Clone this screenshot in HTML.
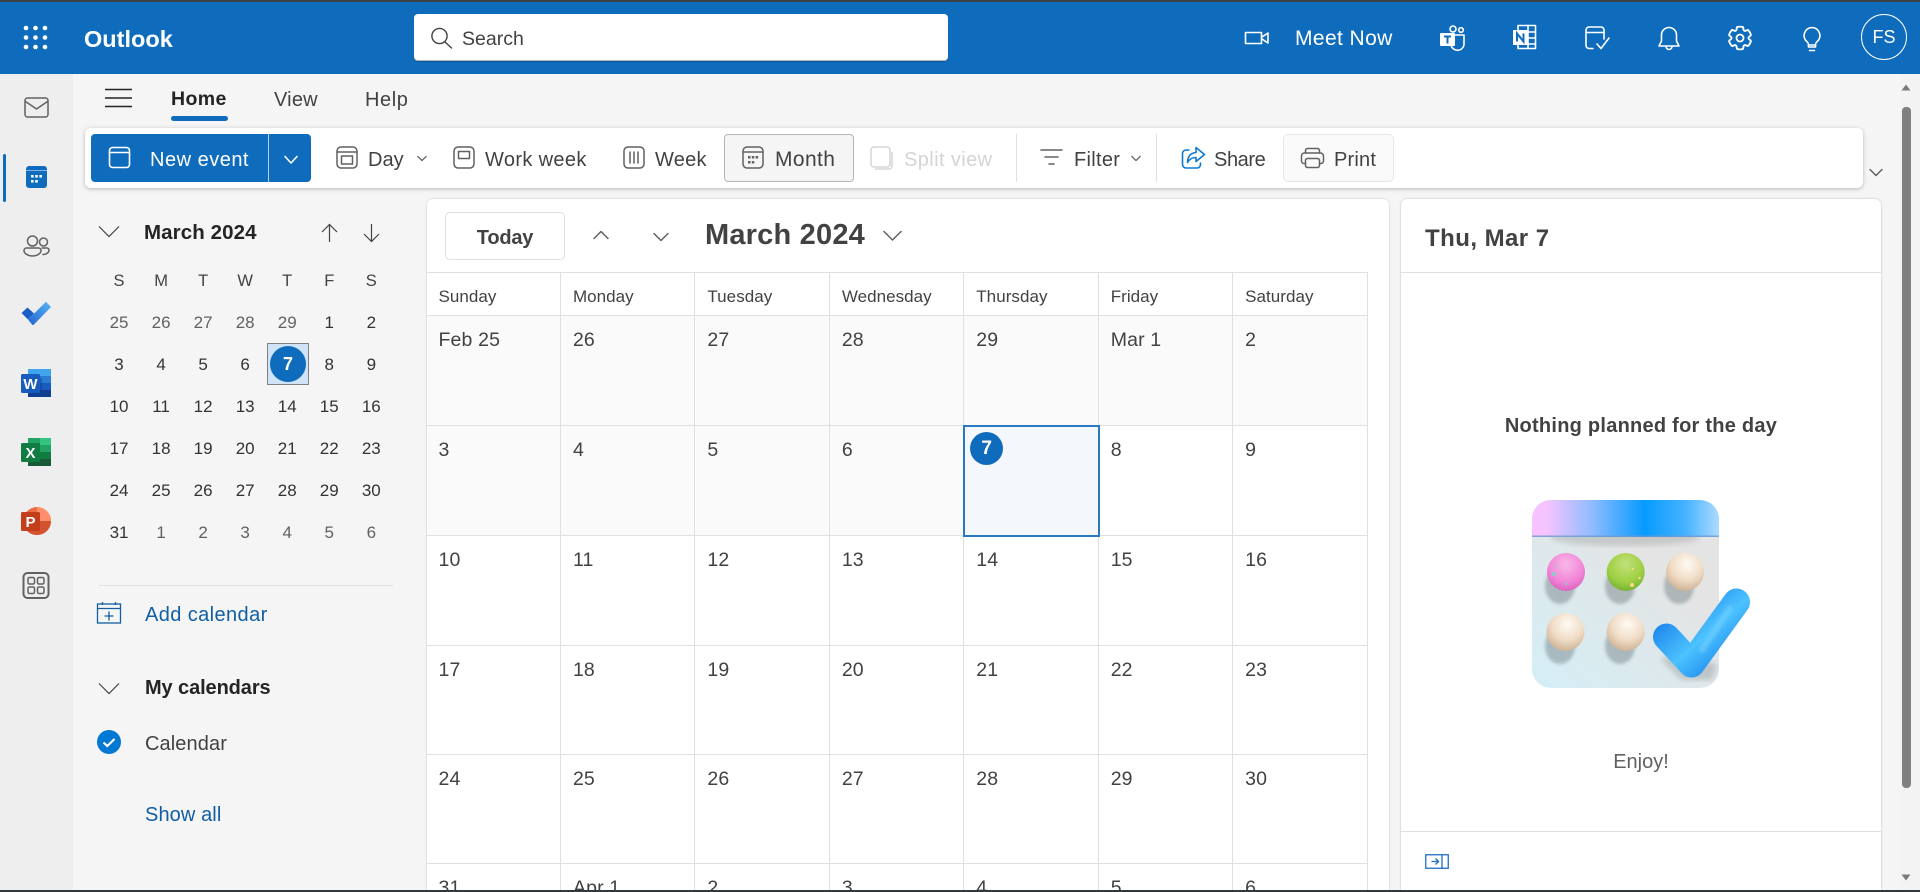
<!DOCTYPE html>
<html lang="en"><head><meta charset="utf-8"><title>Outlook Calendar</title>
<style>
html,body{margin:0;padding:0;width:1920px;height:892px;overflow:hidden;background:#f5f5f5;font-family:"Liberation Sans",sans-serif;color:#242424}
#root{position:absolute;left:0;top:0;width:1920px;height:892px;overflow:hidden}
.t{position:absolute;white-space:nowrap;line-height:1}
.a{position:absolute}
svg{position:absolute;overflow:visible}
.s{fill:none;stroke:#616161;stroke-width:1.5;stroke-linecap:round;stroke-linejoin:round}
.w{fill:none;stroke:#fff;stroke-width:1.6;stroke-linecap:round;stroke-linejoin:round}
.mini{position:absolute;left:98px;top:260px;display:grid;grid-template-columns:repeat(7,42.05px);grid-auto-rows:42px;font-size:17px;color:#333}
.mini div{display:flex;align-items:center;justify-content:center}
.mini .o{color:#616161}
.mini .h{color:#424242;font-size:16.5px}
.grid{position:absolute;display:grid;grid-template-columns:repeat(7,134.45px);grid-template-rows:43px 110px 110px 110px 109px 109px 26px;border-top:1px solid #e0e0e0;box-sizing:border-box}
.grid div{border-right:1px solid #e0e0e0;border-bottom:1px solid #e0e0e0;box-sizing:border-box;padding:13px 0 0 12px;font-size:19.5px;color:#424242;line-height:22px;position:relative;letter-spacing:.15px;overflow:hidden}
.grid div.h{font-size:17px;padding-top:13px;letter-spacing:.05px}
.grid div.g{background:#fafafa}
.grid div.last{border-bottom:0}
.grid div.sel{background:#f4f8fc;outline:2px solid #2a78bf;outline-offset:-1px;z-index:2;overflow:visible}
.sel span{position:absolute;left:6px;top:6px;width:33px;height:33px;border-radius:50%;background:#0f6cbd;color:#fff;font-weight:bold;display:flex;align-items:center;justify-content:center;font-size:19px}
</style></head><body><div id="root">

<!-- top bars -->
<div class="a" style="left:0;top:0;width:1920px;height:2px;background:#3a4248"></div>
<div class="a" style="left:0;top:2px;width:1920px;height:72px;background:#0f6cbd"></div>

<!-- waffle -->
<svg style="left:0;top:0" width="70" height="74"><g fill="#fff"><circle cx="26" cy="28" r="2.3"/><circle cx="35.5" cy="28" r="2.3"/><circle cx="45" cy="28" r="2.3"/><circle cx="26" cy="37.5" r="2.3"/><circle cx="35.5" cy="37.5" r="2.3"/><circle cx="45" cy="37.5" r="2.3"/><circle cx="26" cy="47" r="2.3"/><circle cx="35.5" cy="47" r="2.3"/><circle cx="45" cy="47" r="2.3"/></g></svg>
<div class="t" style="left:84px;top:28px;font-size:23.5px;font-weight:bold;color:#fff">Outlook</div>

<!-- search -->
<div class="a" style="left:414px;top:14px;width:534px;height:47px;background:#fff;border-radius:4px;box-shadow:inset 0 -1px 0 #b5b5b5,0 1px 1px rgba(0,0,0,.2)"></div>
<svg style="left:429px;top:26px" width="26" height="24" viewBox="0 0 26 24"><circle cx="10.5" cy="10" r="7.6" fill="none" stroke="#424242" stroke-width="1.4"/><path d="M16 16l6.500 6" stroke="#424242" stroke-width="1.4" fill="none" stroke-linecap="round"/></svg>
<div class="t" style="left:462px;top:30px;font-size:19.500px;color:#424242">Search</div>

<!-- header right -->
<svg style="left:1244px;top:29px" width="26" height="18" viewBox="0 0 26 18"><rect x="1.5" y="3.5" width="16" height="11" class="w"/><path d="M18 8l6-4v10l-6-4" class="w"/></svg>
<div class="t" style="left:1295px;top:28px;font-size:21px;color:#fff;letter-spacing:.4px">Meet Now</div>
<!-- teams -->
<svg style="left:1438px;top:24px" width="28" height="28" viewBox="0 0 28 28"><circle cx="15" cy="5" r="3" class="w"/><circle cx="23" cy="6" r="2.3" class="w"/><path d="M11 11h15v8a6.5 6.5 0 0 1-13 1.5" class="w"/><rect x="2" y="9" width="15" height="13" rx="1" fill="#fff"/><path d="M6 12.5h7M9.5 12.5V19.5" stroke="#0f6cbd" stroke-width="2" fill="none"/></svg>
<!-- onenote -->
<svg style="left:1512px;top:24px" width="26" height="27" viewBox="0 0 26 27"><path d="M6 1.5h17.5v23H6z" class="w" stroke-width="1.4"/><path d="M16 8h7M16 14h7M16 20h7M16 1.5v23" class="w" stroke-width="1.3"/><rect x="1" y="6" width="15" height="15" fill="#fff"/><path d="M5 17.500V9.500l6.500 8V9.500" stroke="#0f6cbd" stroke-width="2" fill="none"/></svg>
<!-- todo -->
<svg style="left:1584px;top:25px" width="28" height="28" viewBox="0 0 28 28"><path d="M9 23.500H5a3 3 0 0 1-3-3V5a3 3 0 0 1 3-3h12a3 3 0 0 1 3 3v9" class="w"/><path d="M2 7.500h18" class="w"/><path d="M13 19l4 4.500L25 13" class="w"/></svg>
<!-- bell -->
<svg style="left:1655px;top:25px" width="28" height="28" viewBox="0 0 28 28"><path d="M14 2.500a7.500 7.500 0 0 0-7.500 7.500v6L4 21h20l-2.500-5v-6A7.500 7.500 0 0 0 14 2.500z" class="w"/><path d="M11 21.500a3 3 0 0 0 6 0" class="w"/></svg>
<!-- gear -->
<svg style="left:1726px;top:24px" width="28" height="28" viewBox="0 0 24 24"><path class="w" stroke-width="1.4" d="M12.010 2.250c.74 0 1.470.1 2.180.25.320.07.550.33.590.65l.170 1.530a1.380 1.380 0 0 0 1.920 1.110l1.400-.61c.3-.13.640-.06.850.17a9.800 9.800 0 0 1 2.200 3.800c.1.3 0 .63-.26.82l-1.240.92a1.380 1.380 0 0 0 0 2.220l1.240.92c.26.190.36.520.27.820a9.800 9.800 0 0 1-2.200 3.800.75.75 0 0 1-.85.170l-1.400-.62a1.380 1.380 0 0 0-1.930 1.120l-.17 1.520a.75.75 0 0 1-.57.650 9.520 9.520 0 0 1-4.410 0 .75.75 0 0 1-.57-.650l-.17-1.520a1.380 1.380 0 0 0-1.930-1.110l-1.400.62a.75.75 0 0 1-.85-.180 9.800 9.800 0 0 1-2.200-3.800c-.1-.3.01-.63.27-.82l1.240-.92a1.380 1.380 0 0 0 0-2.220l-1.240-.92a.75.75 0 0 1-.27-.82 9.800 9.800 0 0 1 2.200-3.800c.2-.23.54-.3.85-.17l1.400.62c.83.37 1.790-.19 1.930-1.120l.17-1.530a.75.75 0 0 1 .58-.65c.7-.15 1.430-.24 2.180-.25Z"/><circle cx="12" cy="12" r="3" class="w" stroke-width="1.4"/></svg>
<!-- bulb -->
<svg style="left:1798px;top:25px" width="28" height="28" viewBox="0 0 28 28"><path d="M14 2.500a8 8 0 0 0-5 14.200c.9.800 1.400 1.800 1.500 3v2.300h7v-2.300c.1-1.200.6-2.200 1.500-3a8 8 0 0 0-5-14.200z" class="w"/><path d="M10.500 20h7" class="w"/><path d="M11.500 25.500h5" class="w" stroke-width="2"/></svg>
<div class="a" style="left:1861px;top:14px;width:46px;height:46px;border:1.3px solid #fff;border-radius:50%;box-sizing:border-box;color:#fff;font-size:18px;display:flex;align-items:center;justify-content:center">FS</div>

<!-- left rail -->
<div class="a" style="left:0;top:74px;width:73px;height:816px;background:#eeeeee"></div>
<svg style="left:24px;top:97px" width="25" height="21" viewBox="0 0 25 21"><rect x="1" y="1" width="23" height="19" rx="2.500" class="s"/><path d="M1.500 4.500L12.500 12l11-7.500" class="s"/></svg>
<div class="a" style="left:3px;top:154px;width:3px;height:48px;background:#0f6cbd;border-radius:2px"></div>
<svg style="left:26px;top:166px" width="21" height="22" viewBox="0 0 21 22"><rect x="0" y="0" width="21" height="22" rx="3" fill="#0f6cbd"/><rect x="0" y="4" width="21" height="1" fill="#7fb5e6"/><g fill="#fff"><rect x="5" y="9" width="2.600" height="2.600"/><rect x="9.200" y="9" width="2.600" height="2.600"/><rect x="13.400" y="9" width="2.600" height="2.600"/><rect x="5" y="14" width="2.600" height="2.600"/><rect x="9.200" y="14" width="2.600" height="2.600"/></g></svg>
<svg style="left:23px;top:235px" width="27" height="22" viewBox="0 0 27 22"><circle cx="9.500" cy="6" r="5" class="s"/><circle cx="20.500" cy="7" r="4" class="s"/><path d="M3.500 13h12a2.500 2.500 0 0 1 2.500 2.500c0 3-4 5.500-8.500 5.500S1 18.500 1 15.500A2.500 2.500 0 0 1 3.500 13z" class="s"/><path d="M20 19.500c3.500 0 6-2 6-4.500a2 2 0 0 0-2-2h-5" class="s"/></svg>
<svg style="left:21px;top:301px" width="30" height="25" viewBox="0 0 30 25"><defs><linearGradient id="td" x1="0" y1="1" x2="1" y2="0"><stop offset="0" stop-color="#2564cf"/><stop offset="1" stop-color="#56b4f5"/></linearGradient></defs><path d="M0.500 12L6.500 6.500 13 12.500 7 18.500z" fill="#1b5fc4"/><path d="M7 18.500L25 0.800 30 6 13 23.500q-1 1-2 0z" fill="url(#td)"/></svg>
<!-- Word -->
<svg style="left:21px;top:369px" width="30" height="28" viewBox="0 0 30 28"><rect x="7" y="0" width="23" height="7" fill="#41a5ee"/><rect x="7" y="7" width="23" height="7" fill="#2b7cd3"/><rect x="7" y="14" width="23" height="7" fill="#185abd"/><rect x="7" y="21" width="23" height="7" fill="#103f91"/><rect x="7" y="9" width="14" height="15" fill="#0c3a85" opacity=".4"/><rect x="0" y="5" width="19" height="19" rx="1.500" fill="#185abd"/><text x="9.500" y="20" font-family="Liberation Sans" font-size="15" font-weight="bold" fill="#fff" text-anchor="middle">W</text></svg>
<!-- Excel -->
<svg style="left:21px;top:438px" width="30" height="28" viewBox="0 0 30 28"><rect x="7" y="0" width="12" height="7" fill="#21a366"/><rect x="19" y="0" width="11" height="7" fill="#33c481"/><rect x="7" y="7" width="12" height="7" fill="#107c41"/><rect x="19" y="7" width="11" height="7" fill="#21a366"/><rect x="7" y="14" width="12" height="7" fill="#185c37"/><rect x="19" y="14" width="11" height="7" fill="#107c41"/><rect x="7" y="21" width="23" height="7" fill="#185c37"/><rect x="0" y="5" width="19" height="19" rx="1.500" fill="#107c41"/><text x="9.500" y="20" font-family="Liberation Sans" font-size="15" font-weight="bold" fill="#fff" text-anchor="middle">X</text></svg>
<!-- PPT -->
<svg style="left:21px;top:507px" width="30" height="28" viewBox="0 0 30 28"><circle cx="16" cy="14" r="14" fill="#ed6c47"/><path d="M16 0a14 14 0 0 1 14 14H16z" fill="#ff8f6b"/><path d="M16 14h14a14 14 0 0 1-25 8.700z" fill="#d35230"/><rect x="0" y="5" width="19" height="19" rx="1.500" fill="#c43e1c"/><text x="9.500" y="20" font-family="Liberation Sans" font-size="15" font-weight="bold" fill="#fff" text-anchor="middle">P</text></svg>
<!-- Apps -->
<svg style="left:22px;top:572px" width="28" height="28" viewBox="0 0 28 28"><rect x="1.500" y="1" width="25" height="25" rx="4" fill="none" stroke="#616161" stroke-width="2"/><g fill="none" stroke="#616161" stroke-width="1.500"><rect x="6" y="5.500" width="6.500" height="6.500" rx="1.500"/><rect x="15.500" y="5.500" width="6.500" height="6.500" rx="1.500"/><rect x="6" y="15" width="6.500" height="6.500" rx="1.500"/><rect x="15.500" y="15" width="6.500" height="6.500" rx="1.500"/></g></svg>

<!-- tabs -->
<svg style="left:105px;top:88px" width="28" height="20" viewBox="0 0 28 20"><path d="M0 1.500h27M0 10h27M0 18.500h27" stroke="#242424" stroke-width="1.500" fill="none"/></svg>
<div class="t" style="left:171px;top:90px;font-size:19.5px;font-weight:bold;color:#242424;letter-spacing:.4px">Home</div>
<div class="a" style="left:171px;top:116px;width:57px;height:5px;background:#0f6cbd;border-radius:3px"></div>
<div class="t" style="left:274px;top:90px;font-size:20px;color:#424242;letter-spacing:.2px">View</div>
<div class="t" style="left:365px;top:90px;font-size:20px;color:#424242;letter-spacing:.6px">Help</div>

<!-- ribbon -->
<div class="a" style="left:85px;top:128px;width:1778px;height:60px;background:#fff;border-radius:6px;box-shadow:0 1px 4px rgba(0,0,0,.25)"></div>
<div class="a" style="left:91px;top:134px;width:220px;height:48px;background:#0f6cbd;border-radius:4px"></div>
<div class="a" style="left:268px;top:134px;width:1px;height:48px;background:#b7d3ec"></div>
<svg style="left:108px;top:146px" width="23" height="23" viewBox="0 0 23 23"><rect x="1.500" y="1.500" width="20" height="20" rx="3" class="w"/><path d="M1.500 6.500h20" class="w"/></svg>
<div class="t" style="left:150px;top:150px;font-size:20px;color:#fff;letter-spacing:.5px">New event</div>
<svg style="left:284px;top:155px" width="14" height="10" viewBox="0 0 14 10"><path d="M1 1.500l6 6.500 6-6.500" class="w" stroke-width="1.300"/></svg>

<svg style="left:336px;top:146px" width="22" height="23" viewBox="0 0 22 23"><rect x="1" y="1" width="20" height="21" rx="4" class="s"/><path d="M1 6h20" class="s"/><rect x="5.500" y="10" width="11" height="8" class="s"/></svg>
<div class="t" style="left:368px;top:150px;font-size:20px;color:#424242">Day</div>
<svg style="left:417px;top:155px" width="10" height="7" viewBox="0 0 12 8"><path d="M1 1.500l5 5 5-5" class="s" stroke-width="1"/></svg>

<svg style="left:453px;top:146px" width="22" height="23" viewBox="0 0 22 23"><rect x="1" y="1" width="20" height="21" rx="4" class="s"/><rect x="5.500" y="5.500" width="11" height="7" class="s"/></svg>
<div class="t" style="left:485px;top:150px;font-size:20px;color:#424242;letter-spacing:.35px">Work week</div>

<svg style="left:623px;top:146px" width="22" height="23" viewBox="0 0 22 23"><rect x="1" y="1" width="20" height="21" rx="4" class="s"/><path d="M7 6v11M11 6v11M15 6v11" class="s" stroke-width="1.200"/></svg>
<div class="t" style="left:655px;top:150px;font-size:20px;color:#424242;letter-spacing:.25px">Week</div>

<div class="a" style="left:724px;top:134px;width:130px;height:48px;background:#f5f5f5;border:1px solid #b5b5b5;border-radius:4px;box-sizing:border-box"></div>
<svg style="left:742px;top:146px" width="22" height="23" viewBox="0 0 22 23"><rect x="1" y="1" width="20" height="21" rx="4" class="s"/><path d="M1 6h20" class="s"/><g fill="#616161"><rect x="6" y="10" width="2.500" height="2.500"/><rect x="9.800" y="10" width="2.500" height="2.500"/><rect x="13.600" y="10" width="2.500" height="2.500"/><rect x="6" y="15" width="2.500" height="2.500"/><rect x="9.800" y="15" width="2.500" height="2.500"/></g></svg>
<div class="t" style="left:775px;top:149px;font-size:21px;color:#424242;letter-spacing:.4px">Month</div>

<svg style="left:870px;top:146px" width="24" height="24" viewBox="0 0 24 24"><rect x="1" y="1" width="19" height="20" rx="3" fill="none" stroke="#d6d6d6" stroke-width="1.500"/><path d="M5 23h14a3 3 0 0 0 3-3V6" fill="none" stroke="#d6d6d6" stroke-width="1.500"/></svg>
<div class="t" style="left:904px;top:150px;font-size:20px;color:#d4d4d4;letter-spacing:.4px">Split view</div>
<div class="a" style="left:1016px;top:134px;width:1px;height:48px;background:#e0e0e0"></div>

<svg style="left:1040px;top:148px" width="24" height="18" viewBox="0 0 24 18"><path d="M1 2h21M5 9h13M9 16h5" class="s" stroke-width="1.600"/></svg>
<div class="t" style="left:1074px;top:150px;font-size:20px;color:#424242;letter-spacing:.3px">Filter</div>
<svg style="left:1131px;top:155px" width="10" height="7" viewBox="0 0 12 8"><path d="M1 1.500l5 5 5-5" class="s" stroke-width="1"/></svg>
<div class="a" style="left:1156px;top:134px;width:1px;height:48px;background:#e0e0e0"></div>

<svg style="left:1181px;top:146px" width="25" height="24" viewBox="0 0 25 24"><path d="M8 4H5a3.500 3.500 0 0 0-3.500 3.500v11A3.500 3.500 0 0 0 5 22h11a3.500 3.500 0 0 0 3.500-3.500V17" fill="none" stroke="#0f78d4" stroke-width="1.600" stroke-linecap="round"/><path d="M15 1.500L23.500 8.500 15 15.500V11.500c-4 0-6.500 1.500-8.500 5 .2-6 3-9.500 8.500-10z" fill="none" stroke="#0f78d4" stroke-width="1.600" stroke-linejoin="round"/></svg>
<div class="t" style="left:1214px;top:150px;font-size:20px;color:#424242;letter-spacing:-.4px">Share</div>

<div class="a" style="left:1283px;top:134px;width:111px;height:48px;background:#fafafa;border:1px solid #e6e6e6;border-radius:5px;box-sizing:border-box"></div>
<svg style="left:1300px;top:147px" width="25" height="22" viewBox="0 0 25 22"><path d="M5.500 6V3.500a2 2 0 0 1 2-2h10a2 2 0 0 1 2 2V6" class="s"/><path d="M5.500 16.500H4A2.500 2.500 0 0 1 1.500 14V9A3 3 0 0 1 4.500 6h16a3 3 0 0 1 3 3v5a2.500 2.500 0 0 1-2.500 2.500h-1.500" class="s"/><rect x="5.500" y="11.500" width="14" height="9" rx="2" class="s"/></svg>
<div class="t" style="left:1334px;top:150px;font-size:20px;color:#424242;letter-spacing:.2px">Print</div>
<svg style="left:1869px;top:168px" width="14" height="9" viewBox="0 0 14 9"><path d="M1 1.500l6 6 6-6" class="s" stroke-width="1"/></svg>

<!-- mini calendar -->
<svg style="left:98px;top:225px" width="22" height="14" viewBox="0 0 22 14"><path d="M1 1.500l10 10 10-10" fill="none" stroke="#424242" stroke-width="1.200"/></svg>
<div class="t" style="left:144px;top:223px;font-size:20.500px;font-weight:bold;color:#242424;letter-spacing:.1px">March 2024</div>
<svg style="left:321px;top:223px" width="17" height="20" viewBox="0 0 17 20"><path d="M8.500 19V1.500M1 9l7.500-7.500L16 9" fill="none" stroke="#424242" stroke-width="1.200"/></svg>
<svg style="left:363px;top:223px" width="17" height="20" viewBox="0 0 17 20"><path d="M8.500 1v17.500M1 11l7.500 7.500L16 11" fill="none" stroke="#424242" stroke-width="1.200"/></svg>

<div class="a" style="left:267px;top:343px;width:42px;height:42px;background:#cfe4fa;border:1px solid #808080;box-sizing:border-box"></div>
<div class="a" style="left:270px;top:346px;width:36px;height:36px;border-radius:50%;background:#0f6cbd;color:#fff;font-weight:bold;font-size:18px;display:flex;align-items:center;justify-content:center">7</div>
<div class="mini">
<div class="h">S</div><div class="h">M</div><div class="h">T</div><div class="h">W</div><div class="h">T</div><div class="h">F</div><div class="h">S</div>
<div class="o">25</div><div class="o">26</div><div class="o">27</div><div class="o">28</div><div class="o">29</div><div>1</div><div>2</div>
<div>3</div><div>4</div><div>5</div><div>6</div><div></div><div>8</div><div>9</div>
<div>10</div><div>11</div><div>12</div><div>13</div><div>14</div><div>15</div><div>16</div>
<div>17</div><div>18</div><div>19</div><div>20</div><div>21</div><div>22</div><div>23</div>
<div>24</div><div>25</div><div>26</div><div>27</div><div>28</div><div>29</div><div>30</div>
<div>31</div><div class="o">1</div><div class="o">2</div><div class="o">3</div><div class="o">4</div><div class="o">5</div><div class="o">6</div>
</div>
<div class="a" style="left:99px;top:585px;width:294px;height:1px;background:#e0e0e0"></div>
<svg style="left:96px;top:601px" width="26" height="23" viewBox="0 0 26 23"><rect x="1.500" y="3" width="23" height="19" fill="none" stroke="#115ea3" stroke-width="1.300"/><path d="M1.500 7.500h23M6.500 1v3M19.500 1v3M13 10.500v9M8.500 15h9" fill="none" stroke="#115ea3" stroke-width="1.300"/></svg>
<div class="t" style="left:145px;top:605px;font-size:20px;color:#115ea3;letter-spacing:.4px">Add calendar</div>
<svg style="left:98px;top:682px" width="22" height="13" viewBox="0 0 22 13"><path d="M1 1.500l10 10 10-10" fill="none" stroke="#424242" stroke-width="1.200"/></svg>
<div class="t" style="left:145px;top:678px;font-size:20px;font-weight:bold;color:#242424;letter-spacing:-.1px">My calendars</div>
<svg style="left:97px;top:730px" width="24" height="24" viewBox="0 0 24 24"><circle cx="12" cy="12" r="12" fill="#0078d4"/><path d="M6.500 12.500l3.800 3.500 7.200-7" fill="none" stroke="#fff" stroke-width="2.200"/></svg>
<div class="t" style="left:145px;top:734px;font-size:20px;color:#424242;letter-spacing:.1px">Calendar</div>
<div class="t" style="left:145px;top:805px;font-size:20px;color:#115ea3;letter-spacing:.1px">Show all</div>

<!-- calendar panel -->
<div class="a" style="left:427px;top:199px;width:962px;height:691px;background:#fff;border-radius:6px 6px 0 0;box-shadow:0 0 2px rgba(0,0,0,.2);overflow:hidden"></div>
<div class="a" style="left:445px;top:212px;width:120px;height:48px;border:1px solid #e0e0e0;border-radius:5px;background:#fff;box-sizing:border-box;font-size:20px;font-weight:bold;color:#424242;display:flex;align-items:center;justify-content:center;letter-spacing:-.2px;padding-top:4px">Today</div>
<svg style="left:593px;top:230px" width="16" height="10" viewBox="0 0 16 10"><path d="M1 8.500l7-7 7 7" class="s" stroke-width="1.200"/></svg>
<svg style="left:653px;top:232px" width="16" height="10" viewBox="0 0 16 10"><path d="M1 1.500l7 7 7-7" class="s" stroke-width="1.200"/></svg>
<div class="t" style="left:705px;top:221px;font-size:29px;font-weight:bold;color:#424242;letter-spacing:.2px">March 2024</div>
<svg style="left:883px;top:230px" width="19" height="12" viewBox="0 0 19 12"><path d="M1 1.500l8.500 8.500L18 1.500" class="s" stroke-width="1.300"/></svg>

<div class="a" style="left:427px;top:199px;width:962px;height:691px;overflow:hidden"><div class="grid" style="left:-.5px;top:73px">
<div class="h">Sunday</div><div class="h">Monday</div><div class="h">Tuesday</div><div class="h">Wednesday</div><div class="h">Thursday</div><div class="h">Friday</div><div class="h">Saturday</div>
<div class="g">Feb 25</div><div class="g">26</div><div class="g">27</div><div class="g">28</div><div class="g">29</div><div class="g">Mar 1</div><div class="g">2</div>
<div class="g">3</div><div class="g">4</div><div class="g">5</div><div class="g">6</div><div class="sel"><span>7</span></div><div>8</div><div>9</div>
<div>10</div><div>11</div><div>12</div><div>13</div><div>14</div><div>15</div><div>16</div>
<div>17</div><div>18</div><div>19</div><div>20</div><div>21</div><div>22</div><div>23</div>
<div>24</div><div>25</div><div>26</div><div>27</div><div>28</div><div>29</div><div>30</div>
<div class="last">31</div><div class="last">Apr 1</div><div class="last">2</div><div class="last">3</div><div class="last">4</div><div class="last">5</div><div class="last">6</div>
</div></div>

<!-- details panel -->
<div class="a" style="left:1401px;top:199px;width:480px;height:691px;background:#fff;border-radius:6px 6px 0 0;box-shadow:0 0 2px rgba(0,0,0,.25)"></div>
<div class="t" style="left:1425px;top:227px;font-size:24px;font-weight:bold;color:#424242;letter-spacing:.45px">Thu, Mar 7</div>
<div class="a" style="left:1401px;top:272px;width:480px;height:1px;background:#e0e0e0"></div>
<div class="t" style="left:1401px;width:480px;text-align:center;top:416px;font-size:20px;font-weight:bold;color:#424242;letter-spacing:.25px">Nothing planned for the day</div>

<svg style="left:1490px;top:480px" width="290" height="230" viewBox="0 0 290 230">
<defs>
<linearGradient id="band" x1="0" x2="1" y1="0" y2="0"><stop offset=".08" stop-color="#f5c3ff"/><stop offset=".32" stop-color="#8fbcff"/><stop offset=".6" stop-color="#069bff"/><stop offset=".82" stop-color="#45b2ff"/><stop offset="1" stop-color="#aedbff"/></linearGradient>
<linearGradient id="body" x1=".1" y1="1" x2=".7" y2=".35"><stop offset="0" stop-color="#d5eef5"/><stop offset="1" stop-color="#e4e4e4"/></linearGradient>
<radialGradient id="pk" cx=".5" cy=".3" r=".75"><stop offset="0" stop-color="#f9b8e8"/><stop offset=".6" stop-color="#f287d8"/><stop offset="1" stop-color="#d95cbb"/></radialGradient>
<radialGradient id="gn" cx=".5" cy=".3" r=".75"><stop offset="0" stop-color="#c2e07a"/><stop offset=".6" stop-color="#a0d044"/><stop offset="1" stop-color="#6fae30"/></radialGradient>
<radialGradient id="bg" cx=".55" cy=".3" r=".75"><stop offset="0" stop-color="#fffaf4"/><stop offset=".55" stop-color="#f0dcc6"/><stop offset="1" stop-color="#c9ad8e"/></radialGradient>
<linearGradient id="ck" x1="0" y1="0" x2="1" y2="1"><stop offset="0" stop-color="#1278e8"/><stop offset=".55" stop-color="#4cc2ff"/><stop offset="1" stop-color="#1480ea"/></linearGradient>
<filter id="bl"><feGaussianBlur stdDeviation="1.500"/></filter>
<filter id="bl2"><feGaussianBlur stdDeviation="3"/></filter>
<clipPath id="bx"><rect x="42" y="20" width="187" height="188" rx="19"/></clipPath>
</defs>
<g clip-path="url(#bx)">
<rect x="42" y="20" width="187" height="188" fill="url(#body)"/>
<ellipse cx="135" cy="57" rx="75" ry="9" fill="#000" opacity=".12" filter="url(#bl2)"/>
<rect x="42" y="20" width="187" height="37" fill="url(#band)"/>
<rect x="42" y="55.500" width="187" height="1.500" fill="#6a9ad0" opacity=".8"/>
<g fill="#5a6a70" opacity=".38" filter="url(#bl)"><ellipse cx="70" cy="106" rx="15" ry="18"/><ellipse cx="130" cy="106" rx="15" ry="18"/><ellipse cx="189" cy="106" rx="15" ry="18"/><ellipse cx="70" cy="166" rx="15" ry="18"/><ellipse cx="130" cy="166" rx="15" ry="18"/></g>
<path d="M170 178l22 22h30l5-15-30-10z" fill="#000" opacity=".15" filter="url(#bl2)"/>
</g>
<circle cx="76" cy="92" r="19" fill="url(#pk)"/><circle cx="66" cy="86" r="1" fill="#7fd0c8"/><circle cx="63.500" cy="94" r="2" fill="#7fd0c8"/><circle cx="76" cy="104" r="1.200" fill="#7fd0c8"/>
<circle cx="135.700" cy="92" r="19" fill="url(#gn)"/><circle cx="143" cy="89" r="1" fill="#ffd98a"/><circle cx="149.500" cy="98" r="1.200" fill="#ffd98a"/><circle cx="142" cy="105" r="2" fill="#ffd98a"/>
<circle cx="195" cy="92" r="19" fill="url(#bg)"/>
<circle cx="75.500" cy="152" r="19" fill="url(#bg)"/>
<circle cx="135.700" cy="152" r="19" fill="url(#bg)"/>
<path d="M176.500 157L201.500 184 246.500 122" fill="none" stroke="url(#ck)" stroke-width="27" stroke-linecap="round" stroke-linejoin="round"/>
<path d="M212 170L240 128" fill="none" stroke="#7cd4ff" stroke-width="6" stroke-linecap="round" opacity=".55" filter="url(#bl)"/>
</svg>

<div class="t" style="left:1401px;width:480px;text-align:center;top:752px;font-size:20px;color:#616161">Enjoy!</div>
<div class="a" style="left:1401px;top:831px;width:480px;height:1px;background:#e0e0e0"></div>
<svg style="left:1425px;top:854px" width="24" height="15" viewBox="0 0 24 15"><rect x=".75" y=".75" width="22.500" height="13.500" fill="none" stroke="#1e6ec8" stroke-width="1.300"/><path d="M17 1v13" stroke="#1e6ec8" stroke-width="1.300"/><path d="M6.500 7.500h7M10.500 4.500l3 3-3 3" fill="none" stroke="#1e6ec8" stroke-width="1.300"/></svg>

<!-- scrollbar -->
<div class="a" style="left:1900px;top:74px;width:20px;height:816px;background:#f3f3f3"></div>
<div class="a" style="left:1902px;top:107px;width:9px;height:681px;background:#808080;border-radius:4px"></div>
<svg style="left:1901px;top:84px" width="10" height="7" viewBox="0 0 10 7"><path d="M5 .5L9.500 6.500H.5z" fill="#7a7a7a"/></svg>
<svg style="left:1901px;top:874px" width="10" height="7" viewBox="0 0 10 7"><path d="M5 6.500L9.500 .5H.5z" fill="#7a7a7a"/></svg>

<div class="a" style="left:0;top:890px;width:1920px;height:2px;background:#33383d"></div>
</div></body></html>
